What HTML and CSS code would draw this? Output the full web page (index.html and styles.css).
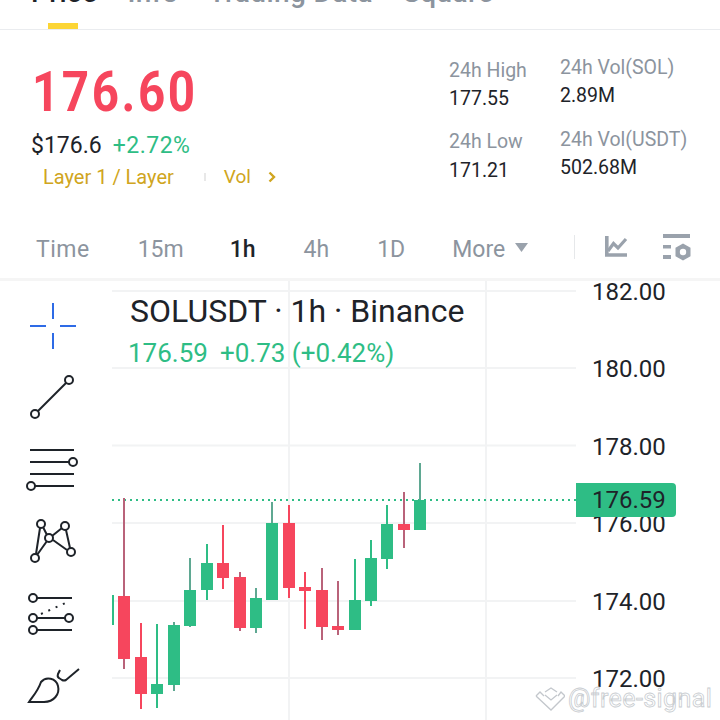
FILE: index.html
```html
<!DOCTYPE html>
<html lang="en">
<head>
<meta charset="utf-8">
<title>SOLUSDT</title>
<link rel="stylesheet" href="styles.css">
</head>
<body>
<div class="page">
  <nav class="tabs">
    <span class="tab tab-active">Price</span>
    <span class="tab">Info</span>
    <span class="tab">Trading Data</span>
    <span class="tab">Square</span>
  </nav>
  <section class="summary">
    <div class="quote">
      <div class="last">176.60</div>
      <div class="fiat"><span class="usd">$176.6</span><span class="pct">+2.72%</span></div>
      <div class="tags"><span>Layer 1 / Layer</span><i class="tag-sep"></i><span class="vol">Vol</span>
        <svg class="chev" width="8" height="12" viewBox="0 0 8 12"><path d="M1.500 1.500 6 6l-4.500 4.500" fill="none" stroke="#d0a520" stroke-width="2.400"/></svg>
      </div>
    </div>
    <div class="stats stats-a">
      <div class="label">24h High</div><div class="value">177.55</div>
      <div class="label second">24h Low</div><div class="value">171.21</div>
    </div>
    <div class="stats stats-b">
      <div class="label">24h Vol(SOL)</div><div class="value">2.89M</div>
      <div class="label second">24h Vol(USDT)</div><div class="value">502.68M</div>
    </div>
  </section>
  <div class="intervals">
    <span>Time</span><span>15m</span><span class="on">1h</span><span>4h</span><span>1D</span>
    <span class="more">More<svg width="13" height="10" viewBox="0 0 13 10"><path d="M0 0h13L6.500 9z" fill="#9aa2ac"/></svg></span>
    <div class="iv-tools">
      <i class="iv-sep"></i>
      <svg class="iv-chart" width="24" height="24" viewBox="604 235 24 24"><path d="M606.800 236v19H627" fill="none" stroke="#9aa2ac" stroke-width="3.600"/><path d="M608 251l5.500-7.500 4.500 4.500 8-9" fill="none" stroke="#9aa2ac" stroke-width="3.200"/></svg>
      <svg class="iv-set" width="30" height="30" viewBox="661 232 30 30"><path d="M662 234h27v4h-27zM662 245h8v3.500h-8zM662 255h8v4h-8z" fill="#9aa2ac"/><path d="M682 243.500l7.500 4.300v8.500l-7.500 4.300-7.500-4.300v-8.500z" fill="#9aa2ac"/><circle cx="682" cy="252" r="3.200" fill="#fff"/></svg>
    </div>
  </div>
  <div class="band"></div>
  <main class="chart">
    <aside class="tools">
      <svg class="tool" width="80" height="72" viewBox="0 290 80 72"><path d="M53 303v16M53 333v16M30 326h16M60 326h16" stroke="#2e6be6" stroke-width="2" fill="none"/></svg>
      <svg class="tool" width="80" height="72" viewBox="0 362 80 72"><path d="M38 411 66 383" class="ink"/><circle cx="35" cy="414" r="4" class="ink"/><circle cx="69" cy="380" r="4" class="ink"/></svg>
      <svg class="tool" width="80" height="72" viewBox="0 434 80 72"><path d="M30 450h44M30 462h39M30 474h44M35 486h39" class="ink"/><circle cx="73" cy="462" r="4" class="ink"/><circle cx="31" cy="486" r="4" class="ink"/></svg>
      <svg class="tool" width="80" height="72" viewBox="0 506 80 72"><path d="M36 554 40 528M37 555 47 541M43 527 47 535M52 536 62 528M66 530 70 548M53 540 67 550" class="ink"/><circle cx="41" cy="524" r="4" class="ink"/><circle cx="65" cy="526" r="4" class="ink"/><circle cx="49" cy="538" r="4" class="ink"/><circle cx="71" cy="552" r="4" class="ink"/><circle cx="35" cy="558" r="4" class="ink"/></svg>
      <svg class="tool" width="80" height="72" viewBox="0 578 80 72"><path d="M37 598h35M37 618h28M37 630h35" class="ink"/><path d="M41 614 70 601" class="ink dots"/><circle cx="33" cy="598" r="4" class="ink"/><circle cx="33" cy="618" r="4" class="ink"/><circle cx="69" cy="618" r="4" class="ink"/><circle cx="33" cy="630" r="4" class="ink"/></svg>
      <svg class="tool" width="80" height="72" viewBox="0 650 80 72"><path d="M29 702H44C54 702 60 694 58 686 56 678 46 676 41 682 38 691 33 696 29 702Z" class="ink"/><path d="M60 670 58 674Q57 677 59 678L62 680Q64 681 66 680L79 669" class="ink"/></svg>
    </aside>
    <div class="plot">
      <svg class="plot-svg" width="608" height="439" viewBox="112 281 608 439">
        <path class="grid" d="M112 291h464M112 368h464M112 445.500h464M112 523h464M112 601h464M112 678h464M289 281v439M486 281v439"/>
        <path class="last-line" d="M112 500H576"/>
        <rect class="wu" x="112" y="595" width="2" height="30"/>
        <rect class="wdm" x="123" y="498" width="2" height="171"/><rect class="d" x="118" y="596" width="12" height="63"/>
        <rect class="wd" x="140" y="623" width="2" height="86"/><rect class="d" x="135" y="657" width="12" height="37"/>
        <rect class="wu" x="156" y="624" width="2" height="84"/><rect class="u" x="151" y="684" width="12" height="10"/>
        <rect class="wum" x="173" y="622" width="2" height="69"/><rect class="u" x="168" y="625" width="12" height="60"/>
        <rect class="wum" x="189" y="558" width="2" height="69"/><rect class="u" x="184" y="590" width="12" height="36"/>
        <rect class="wu" x="206" y="544" width="2" height="56"/><rect class="u" x="201" y="563" width="12" height="27"/>
        <rect class="wd" x="222" y="525" width="2" height="64"/><rect class="d" x="217" y="563" width="12" height="15"/>
        <rect class="wdm" x="239" y="572" width="2" height="59"/><rect class="d" x="234" y="577" width="12" height="51"/>
        <rect class="wum" x="255" y="588" width="2" height="45"/><rect class="u" x="250" y="598" width="12" height="30"/>
        <rect class="wum" x="271" y="502" width="2" height="98"/><rect class="u" x="266" y="523" width="12" height="77"/>
        <rect class="wd" x="288" y="505" width="2" height="93"/><rect class="d" x="283" y="523" width="12" height="65"/>
        <rect class="wd" x="304" y="572" width="2" height="57"/><rect class="d" x="299" y="587" width="12" height="4"/>
        <rect class="wdm" x="321" y="568" width="2" height="72"/><rect class="d" x="316" y="590" width="12" height="37"/>
        <rect class="wdm" x="337" y="581" width="2" height="54"/><rect class="d" x="332" y="626" width="12" height="4"/>
        <rect class="wu" x="354" y="559" width="2" height="71"/><rect class="u" x="349" y="600" width="12" height="30"/>
        <rect class="wu" x="370" y="540" width="2" height="66"/><rect class="u" x="365" y="558" width="12" height="43"/>
        <rect class="wu" x="386" y="505" width="2" height="64"/><rect class="u" x="381" y="524" width="12" height="35"/>
        <rect class="wdm" x="403" y="492" width="2" height="56"/><rect class="d" x="398" y="524" width="12" height="6"/>
        <rect class="wum" x="419" y="463" width="2" height="37"/><rect class="u" x="414" y="500" width="12" height="30"/>
      </svg>
      <div class="legend">
        <div class="symbol">SOLUSDT · 1h · Binance</div>
        <div class="ohlc"><span>176.59</span><span>+0.73 (+0.42%)</span></div>
      </div>
      <div class="axis"><span>182.00</span><span>180.00</span><span>178.00</span><span>176.00</span><span>174.00</span><span>172.00</span></div>
      <div class="tag">176.59</div>
      <div class="mark">
        <svg width="30" height="26" viewBox="535 687 30 26"><path d="M536 697 551 711 565 697M545 696 551 701 557 696M545 693 551 689 557 693M536 697 540 693 544 697M558 697 561 693 565 697" fill="none" stroke="#c3c7cc" stroke-width="1.300"/></svg>
        <span>@free-signal</span>
      </div>
    </div>
  </main>
</div>
</body>
</html>
```
FILE: styles.css
```css
* { box-sizing: border-box; }
html, body { margin: 0; padding: 0; background: #fff; }
.page { width: 720px; height: 720px; overflow: hidden; display: flex; flex-direction: column; font-family: Roboto, sans-serif; color: #1e2329; }

.tabs { height: 30px; flex: none; border-bottom: 1px solid #eaecef; display: flex; gap: 30px; padding-left: 31px; position: relative; overflow: hidden; }
.tab { font-size: 28px; line-height: 30px; margin-top: -22px; font-weight: 500; letter-spacing: .4px; color: #8c949e; white-space: nowrap; }
.tab-active { color: #1e2329; }
.tab-active::after { content: ""; position: absolute; left: 48px; top: 23px; width: 30px; height: 6px; background: #fcd535; }

.summary { height: 195px; flex: none; display: flex; }
.quote { width: 449px; padding-left: 31px; }
.last { font-weight: 700; font-size: 56px; line-height: 60px; letter-spacing: 3px; color: #f6465d; margin: 32px 0 0 1px; transform: scaleX(.85); transform-origin: left center; }
.fiat { display: flex; gap: 11px; font-size: 23px; line-height: 30px; margin-top: 9px; }
.pct { color: #2ebd85; letter-spacing: .5px; }
.tags { display: flex; align-items: center; font-size: 20px; line-height: 24px; color: #d0a520; margin: 4px 0 0 12px; }
.tag-sep { width: 2px; height: 8px; background: #e8e8e8; margin: 0 18px 0 30px; }
.vol { font-size: 19px; }
.chev { margin-left: 17px; }
.stats-a { width: 111px; padding-top: 29px; }
.stats-b { padding-top: 26px; }
.label { font-size: 19.500px; line-height: 24px; color: #8c949e; white-space: nowrap; }
.value { font-size: 19.500px; line-height: 24px; margin-top: 4px; white-space: nowrap; }
.second { margin-top: 19px; }
.stats-a .second + .value { margin-top: 5px; }
.stats-b .second { margin-top: 20px; }

.intervals { height: 53px; flex: none; display: flex; align-items: center; gap: 48px; padding: 0 0 9px 36px; font-size: 23px; color: #8c949e; }
.intervals > span { margin-top: 4px; }
.intervals > span:first-child { letter-spacing: .5px; }
.on { color: #1e2329; font-weight: 500; margin-left: -2px; }
.more { display: flex; align-items: center; gap: 10px; margin-left: -1px; }
.more svg { margin-top: -2px; }
.iv-tools { margin-left: -2px; display: flex; align-items: center; }
.iv-sep { width: 1px; height: 24px; background: #e6e8ea; }
.iv-chart { flex: none; margin-left: 29px; }
.iv-set { flex: none; margin-left: 34px; }

.band { height: 3px; flex: none; background: #f5f5f5; }

.chart { flex: 1; display: flex; min-height: 0; }
.tools { width: 112px; flex: none; padding-top: 9px; display: flex; flex-direction: column; }
.tool { display: block; flex: none; }
.ink { fill: none; stroke: #1e2329; stroke-width: 2; }
.dots { stroke-dasharray: 2 6; }

.plot { flex: 1; position: relative; overflow: hidden; }
.plot-svg { position: absolute; left: 0; top: 0; display: block; }
.grid { fill: none; stroke: #f2f3f4; stroke-width: 2; }
.last-line { fill: none; stroke: #2ebd85; stroke-width: 2; stroke-dasharray: 2 4; }
.u, .wu { fill: #2ebd85; }
.d, .wd { fill: #f6465d; }
.wum { fill: #5fa892; }
.wdm { fill: #b9637a; }

.legend { position: absolute; left: 16px; top: 12px; }
.symbol { margin-left: 2px; font-size: 32px; line-height: 36px; color: #1e2329; white-space: nowrap; }
.ohlc { font-size: 26px; line-height: 30px; color: #2ebd85; display: flex; gap: 12px; margin-top: 9px; white-space: nowrap; }

.axis { position: absolute; left: 480px; top: -2px; display: flex; flex-direction: column; font-size: 24px; color: #1e2329; }
.axis span { height: 77.400px; line-height: 26px; }
.tag { position: absolute; left: 464px; top: 202px; width: 100px; height: 34px; padding-left: 16px; background: #2ebd85; border-radius: 0 4px 4px 0; font-size: 24px; line-height: 34px; color: #1e2329; }
.mark { position: absolute; left: 423px; top: 403px; display: flex; align-items: center; gap: 3px; }
.mark span { font-size: 25px; line-height: 30px; color: #fff; -webkit-text-stroke: .8px #c8ccd0; letter-spacing: .4px; white-space: nowrap; }
```
